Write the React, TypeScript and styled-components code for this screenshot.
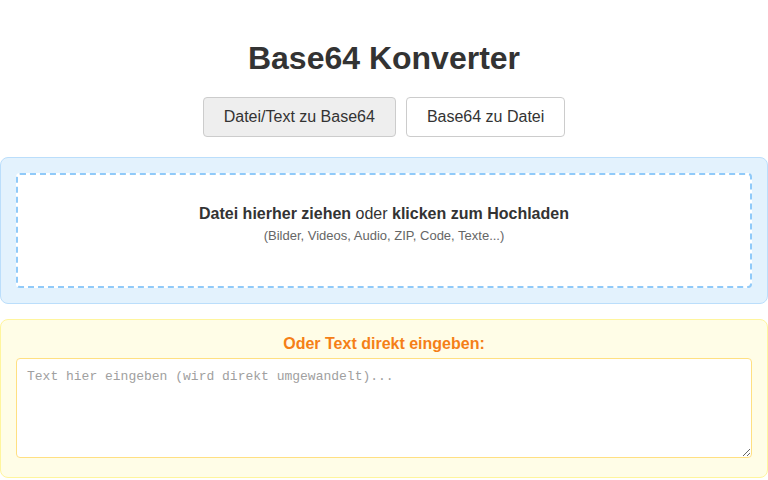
import React from "react";
import styled, { createGlobalStyle } from "styled-components";

const GlobalStyle = createGlobalStyle`
  html, body { margin: 0; padding: 0; background: #ffffff; }
  body { font-family: "Liberation Sans", Arial, sans-serif; color: #333333; }
  * { box-sizing: border-box; }
`;

const Page = styled.div`
  padding: 20px 0;
`;

const Title = styled.h1`
  margin: 20px 0 20px;
  font-size: 32px;
  font-weight: bold;
  text-align: center;
  color: #333333;
`;

const Tabs = styled.div`
  display: flex;
  justify-content: center;
  gap: 10px;
  margin-bottom: 20px;
`;

const TabButton = styled.button<{ $active?: boolean }>`
  font-family: "Liberation Sans", Arial, sans-serif;
  font-size: 16px;
  color: #333333;
  padding: 10px 20px;
  height: 40px;
  border: 1px solid #cccccc;
  border-radius: 4px;
  background: ${(p) => (p.$active ? "#eeeeee" : "#ffffff")};
  cursor: pointer;
`;

const UploadPanel = styled.div`
  background: #e3f2fd;
  border: 1px solid #bbdefb;
  border-radius: 8px;
  padding: 15px;
  margin-bottom: 15px;
`;

const DropZone = styled.div`
  background: #ffffff;
  border: 2px dashed #90caf9;
  border-radius: 4px;
  padding: 30px 20px 0;
  height: 115px;
  text-align: center;
  cursor: pointer;
`;

const DropMain = styled.p`
  margin: 0;
  font-size: 16px;
  color: #333333;
  strong { font-weight: bold; }
`;

const DropHint = styled.p`
  margin: 5px 0 0;
  font-size: 13px;
  color: #666666;
`;

const TextPanel = styled.div`
  background: #fffde7;
  border: 1px solid #fff59d;
  border-radius: 8px;
  padding: 15px;
`;

const TextLabel = styled.div`
  font-size: 16px;
  font-weight: bold;
  color: #f57f17;
  text-align: center;
  margin-bottom: 5px;
`;

const TextInput = styled.textarea`
  width: 100%;
  height: 100px;
  padding: 10px;
  border: 1px solid #ffe082;
  border-radius: 4px;
  background: #ffffff;
  font-family: "Liberation Mono", "Courier New", monospace;
  font-size: 13px;
  color: #333333;
  resize: vertical;
  &::placeholder { color: #a0a0a0; }
`;

export default function App() {
  return (
    <>
      <GlobalStyle />
      <Page>
        <Title>Base64 Konverter</Title>
        <Tabs>
          <TabButton $active>Datei/Text zu Base64</TabButton>
          <TabButton>Base64 zu Datei</TabButton>
        </Tabs>
        <UploadPanel>
          <DropZone>
            <DropMain>
              <strong>Datei hierher ziehen</strong> oder <strong>klicken zum Hochladen</strong>
            </DropMain>
            <DropHint>(Bilder, Videos, Audio, ZIP, Code, Texte...)</DropHint>
          </DropZone>
        </UploadPanel>
        <TextPanel>
          <TextLabel>Oder Text direkt eingeben:</TextLabel>
          <TextInput placeholder="Text hier eingeben (wird direkt umgewandelt)..." />
        </TextPanel>
      </Page>
    </>
  );
}
